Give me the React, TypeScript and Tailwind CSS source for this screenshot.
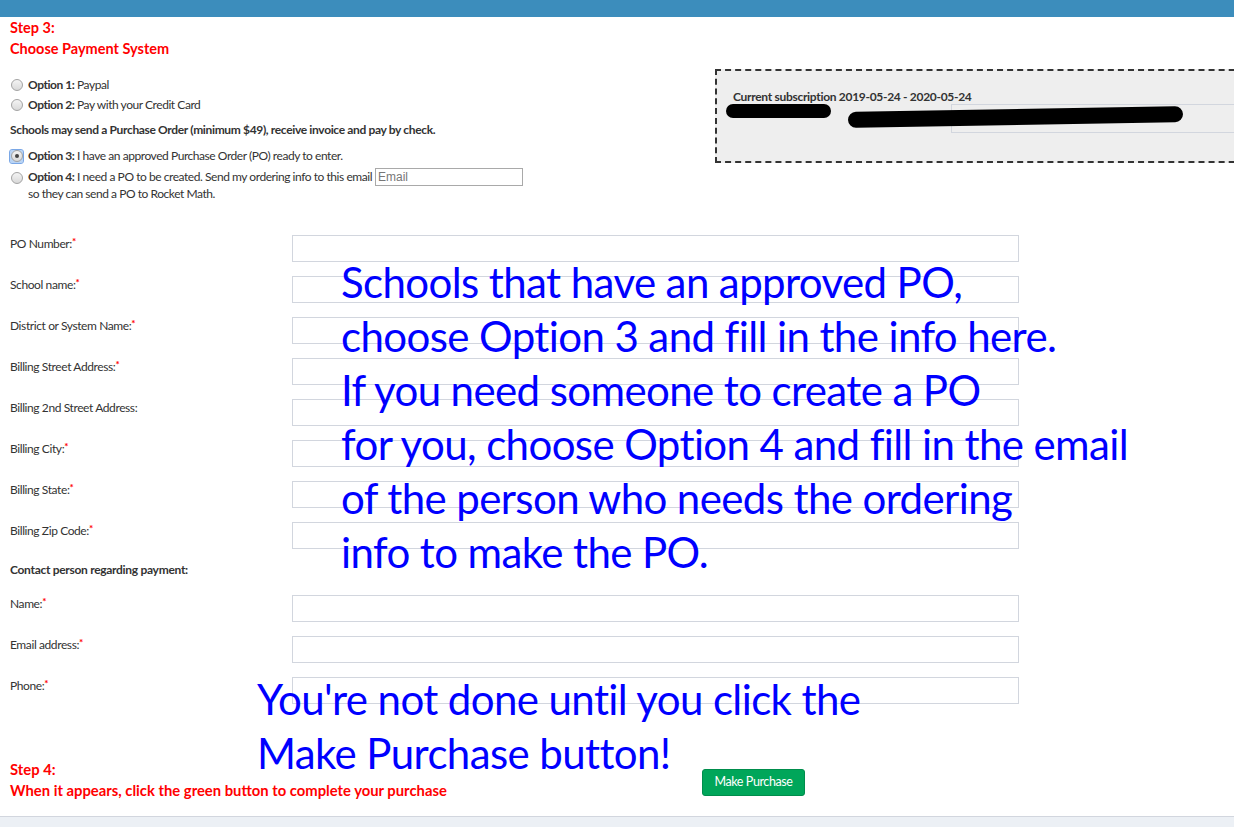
import React from "react";

const F = { fontFamily: "Lato, 'Open Sans', sans-serif" } as const;

function Radio({ checked = false }: { checked?: boolean }) {
  return (
    <span
      className={
        "inline-flex h-[13px] w-[13px] shrink-0 items-center justify-center " +
        (checked ? "rounded-[2px] bg-[#b9d4f5] outline outline-1 outline-[#7aa7e6]" : "")
      }
    >
      <span className="flex h-[12px] w-[12px] items-center justify-center rounded-full border border-[#a3a3a3] bg-gradient-to-b from-[#f4f4f4] to-[#d9d9d9]">
        {checked && <span className="h-[4px] w-[4px] rounded-full bg-[#444]" />}
      </span>
    </span>
  );
}

function Req() {
  return <sup className="relative -top-[3px] text-[10px] font-bold text-[#ff0000]">*</sup>;
}

function Row({ label, req = true }: { label: string; req?: boolean }) {
  return (
    <div className="flex h-[27px] items-start">
      <div className="w-[282px] pt-[1px] text-[12px] leading-[15px] tracking-[-0.4px] text-[#333]">
        {label}
        {req && <Req />}
      </div>
      <div className="h-[27px] w-[727px] border border-[#d2d6de] bg-white" />
    </div>
  );
}

export default function App() {
  return (
    <div className="relative h-[827px] w-[1234px] overflow-hidden bg-white" style={F}>
      <div className="h-[17px] bg-[#3c8dbc]" />
      <div className="flex">
        <div className="w-[715px] shrink-0 pl-[10px]">
          <div className="text-[14.5px] font-bold leading-[21px] text-[#ff0000]">
            <div>Step 3:</div>
            <div>Choose Payment System</div>
          </div>
          <div className="mt-[16px] text-[12px] leading-[20px] tracking-[-0.45px] text-[#333]">
            <div className="flex items-center gap-[5px]">
              <Radio />
              <span>
                <b>Option 1:</b> Paypal
              </span>
            </div>
            <div className="flex items-center gap-[5px]">
              <Radio />
              <span>
                <b>Option 2:</b> Pay with your Credit Card
              </span>
            </div>
            <div className="mt-[5px] font-bold tracking-[-0.35px]">
              Schools may send a Purchase Order (minimum $49), receive invoice and pay by check.
            </div>
            <div className="mt-[6px] flex items-center gap-[5px]">
              <Radio checked />
              <span>
                <b>Option 3:</b> I have an approved Purchase Order (PO) ready to enter.
              </span>
            </div>
            <div className="flex items-start gap-[5px]">
              <span className="pt-[4px]">
                <Radio />
              </span>
              <div className="leading-[16px]">
                <div className="flex items-center pt-[2px]">
                  <span>
                    <b>Option 4:</b> I need a PO to be created. Send my ordering info to this email
                  </span>
                  <span
                    className="ml-[3px] flex h-[18px] w-[148px] items-center border border-[#a9a9a9] px-[2px] text-[12px] tracking-normal text-[#777]"
                    style={{ fontFamily: "'Liberation Sans', Arial, sans-serif" }}
                  >
                    Email
                  </span>
                </div>
                <div>so they can send a PO to Rocket Math.</div>
              </div>
            </div>
          </div>
        </div>
        <div className="mt-[52px] h-[94px] w-[560px] shrink-0 border-2 border-dashed border-[#333] bg-[#eeeeee] pl-[16px] pt-[18px]">
          <div className="relative">
            <div className="text-[12px] font-bold leading-[16px] tracking-[-0.3px] text-[#333]">
              Current subscription 2019-05-24 - 2020-05-24
            </div>
            <div className="ml-[218px] mt-[-1px] h-[29px] w-[320px] border border-[#d2d6de]" />
            <div className="absolute left-[-7px] top-[15px] h-[14px] w-[105px] rounded-full bg-black" />
            <div className="absolute left-[115px] top-[20px] h-[16px] w-[335px] -rotate-[1deg] rounded-full bg-black" />
          </div>
        </div>
      </div>

      <div className="mt-[33px] flex flex-col gap-[14px] pl-[10px]">
        <Row label="PO Number:" />
        <Row label="School name:" />
        <Row label="District or System Name:" />
        <Row label="Billing Street Address:" />
        <Row label="Billing 2nd Street Address:" req={false} />
        <Row label="Billing City:" />
        <Row label="Billing State:" />
        <Row label="Billing Zip Code:" />
      </div>
      <div className="mt-[13px] pl-[10px] text-[12px] font-bold leading-[16px] tracking-[-0.3px] text-[#333]">
        Contact person regarding payment:
      </div>
      <div className="mt-[17px] flex flex-col gap-[14px] pl-[10px]">
        <Row label="Name:" />
        <Row label="Email address:" />
        <Row label="Phone:" />
      </div>

      <div className="mt-[55px] flex items-start pl-[10px]">
        <div className="w-[692px] text-[14.8px] font-bold leading-[21px] text-[#ff0000]">
          <div>Step 4:</div>
          <div>When it appears, click the green button to complete your purchase</div>
        </div>
        <div className="mt-[10px] flex h-[27px] w-[103px] items-center justify-center rounded-[3px] border border-[#008d4c] bg-[#00a65a] text-[12.5px] tracking-[-0.4px] text-white">
          Make Purchase
        </div>
      </div>

      <div className="absolute bottom-0 left-0 right-0 h-[11px] border-t border-[#d2d6de] bg-[#ecf0f5]" />

      <div
        className="pointer-events-none absolute left-[341px] top-[255px] text-[42px] leading-[54px] tracking-[-0.6px] text-[#0000ff]"
        style={F}
      >
        <div>Schools that have an approved PO,</div>
        <div>choose Option 3 and fill in the info here.</div>
        <div>If you need someone to create a PO</div>
        <div>for you, choose Option 4 and fill in the email</div>
        <div>of the person who needs the ordering</div>
        <div>info to make the PO.</div>
      </div>
      <div
        className="pointer-events-none absolute left-[257px] top-[672px] text-[42px] leading-[54px] tracking-[-0.6px] text-[#0000ff]"
        style={F}
      >
        <div>You're not done until you click the</div>
        <div>Make Purchase button!</div>
      </div>
    </div>
  );
}
